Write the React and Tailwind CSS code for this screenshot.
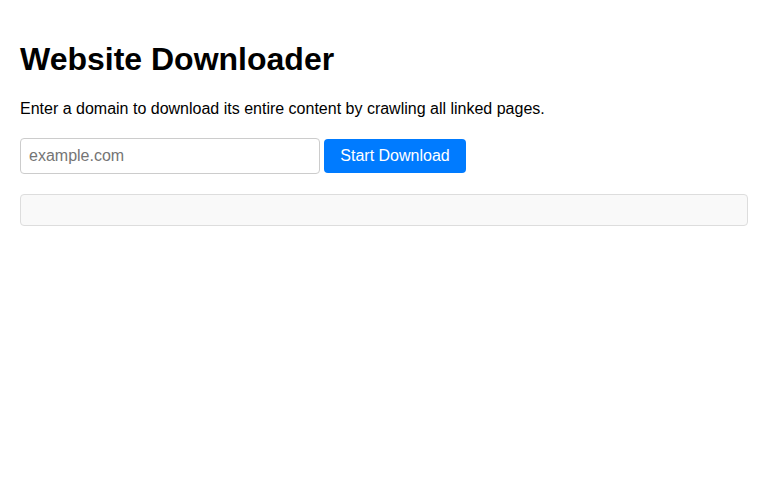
import React, { useState } from "react";

export default function App() {
  const [domain, setDomain] = useState("");

  return (
    <div className="min-h-screen bg-white p-5 font-['Liberation_Sans',Arial,sans-serif] text-black">
      <h1 className="mt-[21px] text-[32px] font-bold leading-[37px]">
        Website Downloader
      </h1>

      <p className="mt-[22px] text-base leading-[18px]">
        Enter a domain to download its entire content by crawling all linked pages.
      </p>

      {/* Domain input + action */}
      <div className="mt-5 flex items-center gap-1">
        <input
          type="text"
          value={domain}
          onChange={(e) => setDomain(e.target.value)}
          placeholder="example.com"
          className="h-9 w-[300px] rounded border border-[#ccc] px-2 text-base placeholder:text-[#757575] focus:outline-none"
        />
        <button
          type="button"
          className="h-[34px] w-[142px] rounded bg-[#007bff] text-base text-white hover:bg-[#0069d9]"
        >
          Start Download
        </button>
      </div>

      {/* Progress / log output */}
      <div className="mt-5 h-8 rounded border border-[#ddd] bg-[#f9f9f9]"></div>
    </div>
  );
}
